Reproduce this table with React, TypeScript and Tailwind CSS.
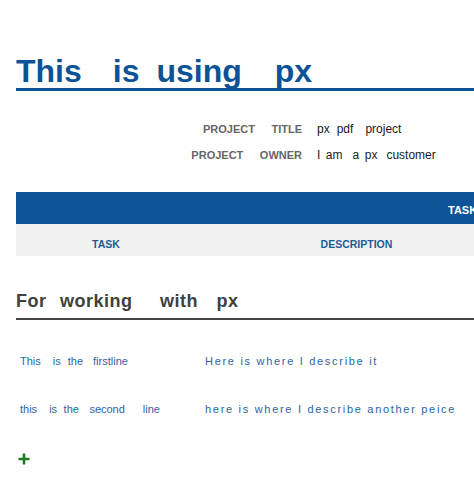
import React from "react";

export default function App() {
  return (
    <div className="w-[474px] h-[486px] overflow-hidden bg-white" style={{ fontFamily: '"Liberation Sans", Arial, sans-serif' }}>
      <div className="w-[600px]">
        {/* Title */}
        <div className="mt-[55px] ml-[16px] border-b-[3px] border-[#0b5394] pb-[1px]">
          <div className="flex text-[32px] leading-[32px] font-bold text-[#0b5394] whitespace-nowrap">
            <span>This</span>
            <span className="ml-[31px]">is</span>
            <span className="ml-[17px]">using</span>
            <span className="ml-[33px]">px</span>
          </div>
        </div>

        {/* Project info */}
        <div className="mt-[25px]">
          <div className="flex items-baseline h-[26px] leading-[26px] whitespace-nowrap">
            <div className="w-[302px] flex justify-end text-[11px] font-bold text-[#666666]">
              <span>PROJECT</span>
              <span className="ml-[16.5px]">TITLE</span>
            </div>
            <div className="ml-[15px] flex text-[12px] text-[#1a1a1a]">
              <span>px</span>
              <span className="ml-[7px]">pdf</span>
              <span className="ml-[12px]">project</span>
            </div>
          </div>
          <div className="flex items-baseline h-[26px] leading-[26px] whitespace-nowrap">
            <div className="w-[302px] flex justify-end text-[11px] font-bold text-[#666666]">
              <span>PROJECT</span>
              <span className="ml-[16.5px]">OWNER</span>
            </div>
            <div className="ml-[15px] flex text-[12px] text-[#1a1a1a]">
              <span>I</span>
              <span className="ml-[5.5px]">am</span>
              <span className="ml-[10px]">a</span>
              <span className="ml-[5.5px]">px</span>
              <span className="ml-[9px]">customer</span>
            </div>
          </div>
        </div>

        {/* Table header */}
        <div className="mt-[24px] ml-[16px]">
          <div className="h-[32px] bg-[#0c5497] pt-[13px]">
            <div className="ml-[432px] text-[11px] leading-[11px] font-bold text-white">TASKS</div>
          </div>
          <div className="h-[32px] bg-[#f1f1f1] pt-[15px] grid grid-cols-[180px_321px] text-[10.5px] leading-[11px] font-bold text-[#1f5b98]">
            <div className="text-center">TASK</div>
            <div className="text-center">DESCRIPTION</div>
          </div>
        </div>

        {/* Section heading */}
        <div className="mt-[36px] ml-[16px] border-b-[2px] border-[#444444] pb-[8px]">
          <div className="flex text-[18px] leading-[18px] font-bold tracking-[0.5px] text-[#404040] whitespace-nowrap">
            <span>For</span>
            <span className="ml-[13.5px]">working</span>
            <span className="ml-[27.5px]">with</span>
            <span className="ml-[18.5px]">px</span>
          </div>
        </div>

        {/* Rows */}
        <div className="mt-[36px] text-[11px] leading-[11px] text-[#2f62a0] whitespace-nowrap">
          <div className="h-[48px] flex">
            <div className="w-[205px] flex pl-[20px]">
              <span>This</span>
              <span className="ml-[12px]">is</span>
              <span className="ml-[7px]">the</span>
              <span className="ml-[10px]">firstline</span>
            </div>
            <div className="tracking-[1.7px]">Here is where I describe it</div>
          </div>
          <div className="h-[48px] flex">
            <div className="w-[205px] flex pl-[20px]">
              <span>this</span>
              <span className="ml-[12px]">is</span>
              <span className="ml-[6.5px]">the</span>
              <span className="ml-[10.5px]">second</span>
              <span className="ml-[18px]">line</span>
            </div>
            <div className="tracking-[1.7px]">here is where I describe another peice</div>
          </div>
        </div>

        {/* Add */}
        <div className="mt-[1px] ml-[18px]">
          <svg width="12" height="12" viewBox="0 0 12 12">
            <path d="M6 0.5V11.5M0.5 6H11.5" stroke="#1f7a1f" strokeWidth="2.6" />
          </svg>
        </div>
      </div>
    </div>
  );
}
